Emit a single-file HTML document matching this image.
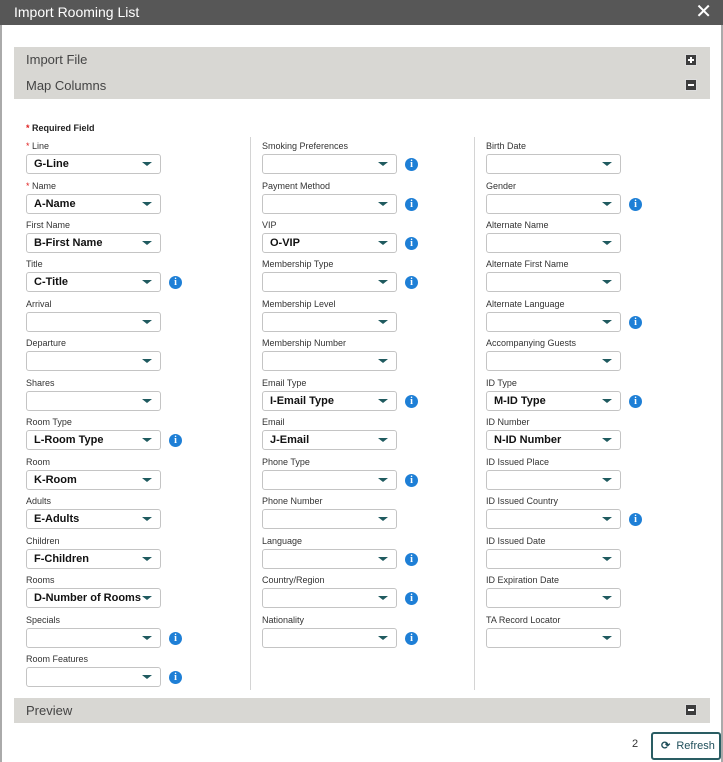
<!DOCTYPE html>
<html><head><meta charset="utf-8"><style>
*{box-sizing:border-box;margin:0;padding:0}
body{width:723px;height:762px;overflow:hidden;background:#fff;font-family:"Liberation Sans",sans-serif;position:relative}
.tb{position:absolute;left:0;top:0;width:723px;height:25px;background:#575757;color:#fff;font-size:14px;line-height:25px;padding-left:14px}
.x{position:absolute;right:11px;top:2px;font-size:20px;color:#fff;line-height:20px}
.edge{position:absolute;top:25px;width:2px;height:737px;background:#aaa}
.bar{position:absolute;left:14px;width:696px;background:#d8d7d3;color:#444;font-size:13px}
.sq{position:absolute;width:12px;height:12px;background:#3d3d3d;border:1px solid #ddd;display:flex;align-items:center;justify-content:center}
.sq i{display:block;width:6px;height:2px;background:#fff;position:relative}
.sq i.p:after{content:"";position:absolute;left:2px;top:-2px;width:2px;height:6px;background:#fff}
.r{position:absolute;width:200px;height:36px}
.r .l{position:absolute;left:0;top:0;font-size:9px;color:#333;white-space:nowrap}
.r .s{position:absolute;left:0;top:13px;width:135px;height:20px;border:1px solid #c4c4c4;border-radius:3px;font-size:11px;font-weight:bold;color:#111;padding-left:7px;line-height:18px}
.s:after{content:"";position:absolute;right:8px;top:7px;border-left:5px solid transparent;border-right:5px solid transparent;border-top:4px solid #1f5a5f}
.i{position:absolute;left:143px;top:17px;width:13px;height:13px;border-radius:50%;background:#1e7fd6;color:#fff;font-size:10px;font-weight:bold;text-align:center;line-height:13px;font-family:"Liberation Serif",serif}
.st{color:#e02020;font-size:9px}
.div{position:absolute;top:137px;width:1px;height:553px;background:#d4d4d4}
</style></head><body>
<div class="tb">Import Rooming List</div><div class="x">✕</div>
<div class="edge" style="left:0"></div><div class="edge" style="left:721px"></div>
<div class="bar" style="top:47px;height:52px"><div style="position:absolute;left:12px;top:5px">Import File</div><div style="position:absolute;left:12px;top:31px">Map Columns</div></div>
<div class="sq" style="left:685px;top:54px"><i class="p"></i></div>
<div class="sq" style="left:685px;top:79px"><i></i></div>
<div style="position:absolute;left:26px;top:123px;font-size:9px;font-weight:bold;color:#222"><span class="st">*</span> Required Field</div>
<div class="div" style="left:250px"></div><div class="div" style="left:474px"></div>

<div style="position:absolute;left:26px;top:0">
<div class="r" style="top:141px"><div class="l"><span class="st">*</span> Line</div><div class="s">G-Line</div></div>
<div class="r" style="top:180.5px"><div class="l"><span class="st">*</span> Name</div><div class="s">A-Name</div></div>
<div class="r" style="top:220px"><div class="l">First Name</div><div class="s">B-First Name</div></div>
<div class="r" style="top:259.4px"><div class="l">Title</div><div class="s">C-Title</div><div class="i">i</div></div>
<div class="r" style="top:298.8px"><div class="l">Arrival</div><div class="s"></div></div>
<div class="r" style="top:338.3px"><div class="l">Departure</div><div class="s"></div></div>
<div class="r" style="top:377.8px"><div class="l">Shares</div><div class="s"></div></div>
<div class="r" style="top:417.2px"><div class="l">Room Type</div><div class="s">L-Room Type</div><div class="i">i</div></div>
<div class="r" style="top:456.7px"><div class="l">Room</div><div class="s">K-Room</div></div>
<div class="r" style="top:496.1px"><div class="l">Adults</div><div class="s">E-Adults</div></div>
<div class="r" style="top:535.6px"><div class="l">Children</div><div class="s">F-Children</div></div>
<div class="r" style="top:575px"><div class="l">Rooms</div><div class="s">D-Number of Rooms</div></div>
<div class="r" style="top:614.5px"><div class="l">Specials</div><div class="s"></div><div class="i">i</div></div>
<div class="r" style="top:654px"><div class="l">Room Features</div><div class="s"></div><div class="i">i</div></div>
</div>

<div style="position:absolute;left:262px;top:0">
<div class="r" style="top:141px"><div class="l">Smoking Preferences</div><div class="s"></div><div class="i">i</div></div>
<div class="r" style="top:180.5px"><div class="l">Payment Method</div><div class="s"></div><div class="i">i</div></div>
<div class="r" style="top:220px"><div class="l">VIP</div><div class="s">O-VIP</div><div class="i">i</div></div>
<div class="r" style="top:259.4px"><div class="l">Membership Type</div><div class="s"></div><div class="i">i</div></div>
<div class="r" style="top:298.8px"><div class="l">Membership Level</div><div class="s"></div></div>
<div class="r" style="top:338.3px"><div class="l">Membership Number</div><div class="s"></div></div>
<div class="r" style="top:377.8px"><div class="l">Email Type</div><div class="s">I-Email Type</div><div class="i">i</div></div>
<div class="r" style="top:417.2px"><div class="l">Email</div><div class="s">J-Email</div></div>
<div class="r" style="top:456.7px"><div class="l">Phone Type</div><div class="s"></div><div class="i">i</div></div>
<div class="r" style="top:496.1px"><div class="l">Phone Number</div><div class="s"></div></div>
<div class="r" style="top:535.6px"><div class="l">Language</div><div class="s"></div><div class="i">i</div></div>
<div class="r" style="top:575px"><div class="l">Country/Region</div><div class="s"></div><div class="i">i</div></div>
<div class="r" style="top:614.5px"><div class="l">Nationality</div><div class="s"></div><div class="i">i</div></div>
</div>

<div style="position:absolute;left:486px;top:0">
<div class="r" style="top:141px"><div class="l">Birth Date</div><div class="s"></div></div>
<div class="r" style="top:180.5px"><div class="l">Gender</div><div class="s"></div><div class="i">i</div></div>
<div class="r" style="top:220px"><div class="l">Alternate Name</div><div class="s"></div></div>
<div class="r" style="top:259.4px"><div class="l">Alternate First Name</div><div class="s"></div></div>
<div class="r" style="top:298.8px"><div class="l">Alternate Language</div><div class="s"></div><div class="i">i</div></div>
<div class="r" style="top:338.3px"><div class="l">Accompanying Guests</div><div class="s"></div></div>
<div class="r" style="top:377.8px"><div class="l">ID Type</div><div class="s">M-ID Type</div><div class="i">i</div></div>
<div class="r" style="top:417.2px"><div class="l">ID Number</div><div class="s">N-ID Number</div></div>
<div class="r" style="top:456.7px"><div class="l">ID Issued Place</div><div class="s"></div></div>
<div class="r" style="top:496.1px"><div class="l">ID Issued Country</div><div class="s"></div><div class="i">i</div></div>
<div class="r" style="top:535.6px"><div class="l">ID Issued Date</div><div class="s"></div></div>
<div class="r" style="top:575px"><div class="l">ID Expiration Date</div><div class="s"></div></div>
<div class="r" style="top:614.5px"><div class="l">TA Record Locator</div><div class="s"></div></div>
</div>

<div class="bar" style="top:698px;height:25px"><div style="position:absolute;left:12px;top:5px">Preview</div></div>
<div class="sq" style="left:685px;top:704px"><i></i></div>
<div style="position:absolute;left:632px;top:738px;font-size:11px;color:#333">2</div>
<div style="position:absolute;left:651px;top:732px;width:70px;height:28px;border:2px solid #2a5d63;border-radius:3px;font-size:11px;color:#1f4f5a;line-height:24px;padding-left:8px"><span style="font-weight:bold">⟳</span>&nbsp; Refresh</div>
</body></html>
